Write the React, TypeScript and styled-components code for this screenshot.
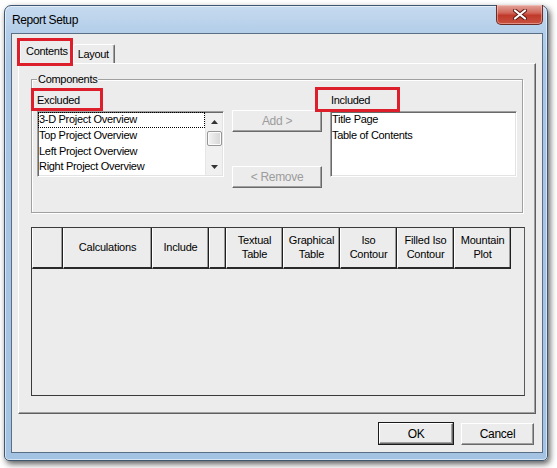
import React from "react";
import styled, { createGlobalStyle } from "styled-components";

const GlobalStyle = createGlobalStyle`
  * { box-sizing: border-box; }
  html, body { margin: 0; padding: 0; background: #ffffff; }
  body {
    font-family: "Liberation Sans", Arial, sans-serif;
    font-size: 11px;
    letter-spacing: -0.3px;
    color: #000;
  }
`;

const Page = styled.div`
  width: 557px;
  height: 468px;
  padding: 5px 0 0 4px;
  overflow: hidden;
`;

const Frame = styled.div`
  width: 544px;
  height: 456px;
  display: flex;
  flex-direction: column;
  padding: 0 4px 7px 6px;
  border: 1px solid #3f5671;
  border-radius: 7px 7px 5px 5px;
  background: linear-gradient(to bottom, #c6daef 0px, #b4cee9 26px, #a9c6e4 60px, #a4c2e1 100%);
  box-shadow: 2px 3px 6px rgba(0, 0, 0, 0.65), inset 0 0 0 1px rgba(255, 255, 255, 0.55);
`;

const TitleBar = styled.div`
  height: 27px;
  display: flex;
  justify-content: space-between;
  align-items: flex-start;
`;

const TitleText = styled.span`
  margin-top: 7px;
  padding-left: 1px;
  font-size: 12px;
  line-height: 14px;
  letter-spacing: -0.4px;
`;

const CloseButton = styled.div`
  width: 47px;
  height: 20px;
  margin-top: -1px;
  display: flex;
  align-items: center;
  justify-content: center;
  border: 1px solid #6b2b26;
  border-top: none;
  border-radius: 0 0 5px 5px;
  background: linear-gradient(to bottom, #e3a59c 0%, #d2695c 40%, #c03a2b 55%, #c9513f 100%);
  box-shadow: inset 0 0 0 1px rgba(255, 220, 210, 0.45);
`;

const Client = styled.div`
  width: 532px;
  height: 420px;
  display: flex;
  flex-direction: column;
  padding: 5px 6px 0;
  border: 1px solid #5a6e86;
  background: #ececec;
`;

const TabStrip = styled.div`
  height: 24px;
  display: flex;
  align-items: flex-end;
  position: relative;
  z-index: 1;
`;

const Tab = styled.div<{ $active?: boolean }>`
  position: relative;
  height: ${(p) => (p.$active ? "24px" : "19px")};
  margin-bottom: ${(p) => (p.$active ? "-1px" : "0")};
  margin-left: ${(p) => (p.$active ? "2px" : "0")};
  padding: ${(p) => (p.$active ? "4px 4px 0 5px" : "3px 5px 0 4px")};
  line-height: 13px;
  border: 1px solid #ffffff;
  border-right-color: #696969;
  border-bottom: none;
  border-radius: 2px 2px 0 0;
  background: #ececec;
  box-shadow: inset -1px 0 0 #a0a0a0;
`;

const Highlight = styled.span<{ $l: number; $t: number; $w: number; $h: number }>`
  position: absolute;
  left: ${(p) => p.$l}px;
  top: ${(p) => p.$t}px;
  width: ${(p) => p.$w}px;
  height: ${(p) => p.$h}px;
  border: 3px solid #dc1f2b;
  pointer-events: none;
  z-index: 5;
`;

const Panel = styled.div`
  width: 518px;
  height: 351px;
  display: flex;
  flex-direction: column;
  padding: 15px 0 0 12px;
  border: 1px solid #ffffff;
  border-right-color: #5f5f5f;
  border-bottom-color: #5f5f5f;
  box-shadow: inset -1px -1px 0 #a0a0a0;
`;

const GroupBox = styled.div`
  width: 492px;
  height: 134px;
  display: flex;
  flex-direction: column;
  padding: 0 5px 0 5px;
  border: 1px solid #a0a0a0;
  box-shadow: inset 1px 1px 0 #ffffff, 1px 1px 0 #ffffff;
`;

const GroupLabel = styled.span`
  align-self: flex-start;
  margin: -7px 0 0 0;
  padding: 0 1px;
  line-height: 13px;
  background: #ececec;
`;

const GroupRow = styled.div`
  display: flex;
  align-items: flex-start;
`;

const ListColumn = styled.div`
  width: 187px;
  display: flex;
  flex-direction: column;
`;

const ListLabel = styled.div<{ $inset?: number }>`
  position: relative;
  height: 25px;
  padding: 8px 0 0 ${(p) => p.$inset ?? 0}px;
  line-height: 13px;
`;

const ListBox = styled.div`
  height: 66px;
  display: flex;
  background: #ffffff;
  border: 1px solid #a0a0a0;
  border-right-color: #ffffff;
  border-bottom-color: #ffffff;
  box-shadow: inset 1px 1px 0 #696969, inset -1px -1px 0 #e3e3e3;
  padding: 0 1px 1px 0;
`;

const Items = styled.div`
  flex: 1;
  display: flex;
  flex-direction: column;
`;

const Item = styled.div<{ $focus?: boolean }>`
  height: 16px;
  line-height: 13px;
  padding-left: 0;
  border: 1px ${(p) => (p.$focus ? "dotted #000" : "solid transparent")};
  white-space: nowrap;
`;

const ScrollBar = styled.div`
  width: 17px;
  display: flex;
  flex-direction: column;
  background: #f0f0f0;
  border-left: 1px solid #e6e6e6;
  margin-top: 1px;
`;

const ArrowButton = styled.div`
  height: 17px;
  display: flex;
  align-items: center;
  justify-content: center;
`;

const Track = styled.div`
  flex: 1;
  padding-top: 1px;
  display: flex;
  justify-content: center;
`;

const Thumb = styled.div`
  width: 15px;
  height: 15px;
  border: 1px solid #979797;
  border-radius: 2px;
  background: linear-gradient(to right, #f4f4f4 0%, #e4e4e4 50%, #d6d6d6 100%);
  box-shadow: inset 0 0 0 1px #fbfbfb;
`;

const ButtonColumn = styled.div`
  width: 90px;
  margin: 0 8px;
  padding-top: 24px;
  display: flex;
  flex-direction: column;
  gap: 34px;
`;

const Button = styled.div<{ $disabled?: boolean; $default?: boolean; $w?: number }>`
  width: ${(p) => p.$w ?? 90}px;
  height: ${(p) => (p.$default ? "21px" : "22px")};
  display: flex;
  align-items: center;
  justify-content: center;
  font-size: 12px;
  color: ${(p) => (p.$disabled ? "#9c9c9c" : "#000")};
  background: #ececec;
  border: 1px solid #ffffff;
  border-right-color: #696969;
  border-bottom-color: #696969;
  box-shadow: inset -1px -1px 0 #a0a0a0;
  outline: ${(p) => (p.$default ? "1px solid #1a1a1a" : "none")};
`;

const Grid = styled.div`
  width: 494px;
  height: 169px;
  margin-top: 14px;
  border: 1px solid #3a3a3a;
  border-right-color: #5a5a5a;
`;

const HeaderRow = styled.div`
  display: flex;
  height: 41px;
`;

const HeaderCell = styled.div<{ $w: number }>`
  width: ${(p) => p.$w}px;
  display: flex;
  align-items: center;
  justify-content: center;
  text-align: center;
  line-height: 14px;
  font-size: 11px;
  letter-spacing: -0.2px;
  border-left: 1px solid #ffffff;
  border-right: 1px solid #1f1f1f;
  border-bottom: 2px solid #2a2a2a;
  box-shadow: inset -1px 0 0 #9a9a9a;
  padding-bottom: 1px;
`;

const Footer = styled.div`
  display: flex;
  justify-content: flex-end;
  gap: 8px;
  margin-top: 9px;
  padding-right: 2px;
`;

const Arrow = ({ down }: { down?: boolean }) => (
  <svg width="7" height="4" viewBox="0 0 7 4">
    <polygon points={down ? "0,0 7,0 3.5,4" : "3.5,0 7,4 0,4"} fill="#333" />
  </svg>
);

const CloseGlyph = () => (
  <svg width="14" height="11" viewBox="0 0 14 11">
    <path d="M2 1.5 L12 9.5 M12 1.5 L2 9.5" stroke="#5a1a16" strokeWidth="4" strokeLinecap="round" />
    <path d="M2 1.5 L12 9.5 M12 1.5 L2 9.5" stroke="#ffffff" strokeWidth="2.2" strokeLinecap="round" />
  </svg>
);

const columns = [
  { w: 31, lines: [] as string[] },
  { w: 89, lines: ["Calculations"] },
  { w: 57, lines: ["Include"] },
  { w: 17, lines: [] },
  { w: 57, lines: ["Textual", "Table"] },
  { w: 57, lines: ["Graphical", "Table"] },
  { w: 57, lines: ["Iso", "Contour"] },
  { w: 57, lines: ["Filled Iso", "Contour"] },
  { w: 57, lines: ["Mountain", "Plot"] },
];

const excluded = [
  "3-D Project Overview",
  "Top Project Overview",
  "Left Project Overview",
  "Right Project Overview",
];

const included = ["Title Page", "Table of Contents"];

export default function App() {
  return (
    <>
      <GlobalStyle />
      <Page>
        <Frame>
          <TitleBar>
            <TitleText>Report Setup</TitleText>
            <CloseButton>
              <CloseGlyph />
            </CloseButton>
          </TitleBar>
          <Client>
            <TabStrip>
              <Tab $active>
                Contents
                <Highlight $l={-4} $t={-3} $w={56} $h={28} />
              </Tab>
              <Tab>Layout</Tab>
            </TabStrip>
            <Panel>
              <GroupBox>
                <GroupLabel>Components</GroupLabel>
                <GroupRow>
                  <ListColumn>
                    <ListLabel>
                      Excluded
                      <Highlight $l={-6} $t={2} $w={72} $h={23} />
                    </ListLabel>
                    <ListBox>
                      <Items>
                        {excluded.map((t, i) => (
                          <Item key={t} $focus={i === 0}>
                            {t}
                          </Item>
                        ))}
                      </Items>
                      <ScrollBar>
                        <ArrowButton>
                          <Arrow />
                        </ArrowButton>
                        <Track>
                          <Thumb />
                        </Track>
                        <ArrowButton>
                          <Arrow down />
                        </ArrowButton>
                      </ScrollBar>
                    </ListBox>
                  </ListColumn>
                  <ButtonColumn>
                    <Button $disabled>Add &gt;</Button>
                    <Button $disabled>&lt; Remove</Button>
                  </ButtonColumn>
                  <ListColumn>
                    <ListLabel $inset={1}>
                      Included
                      <Highlight $l={-15} $t={1} $w={85} $h={25} />
                    </ListLabel>
                    <ListBox>
                      <Items>
                        {included.map((t) => (
                          <Item key={t}>{t}</Item>
                        ))}
                      </Items>
                    </ListBox>
                  </ListColumn>
                </GroupRow>
              </GroupBox>
              <Grid>
                <HeaderRow>
                  {columns.map((c, i) => (
                    <HeaderCell key={i} $w={c.w}>
                      <span>
                        {c.lines.map((l, j) => (
                          <React.Fragment key={l}>
                            {j > 0 && <br />}
                            {l}
                          </React.Fragment>
                        ))}
                      </span>
                    </HeaderCell>
                  ))}
                </HeaderRow>
              </Grid>
            </Panel>
            <Footer>
              <Button $default $w={74}>OK</Button>
              <Button $w={73}>Cancel</Button>
            </Footer>
          </Client>
        </Frame>
      </Page>
    </>
  );
}
